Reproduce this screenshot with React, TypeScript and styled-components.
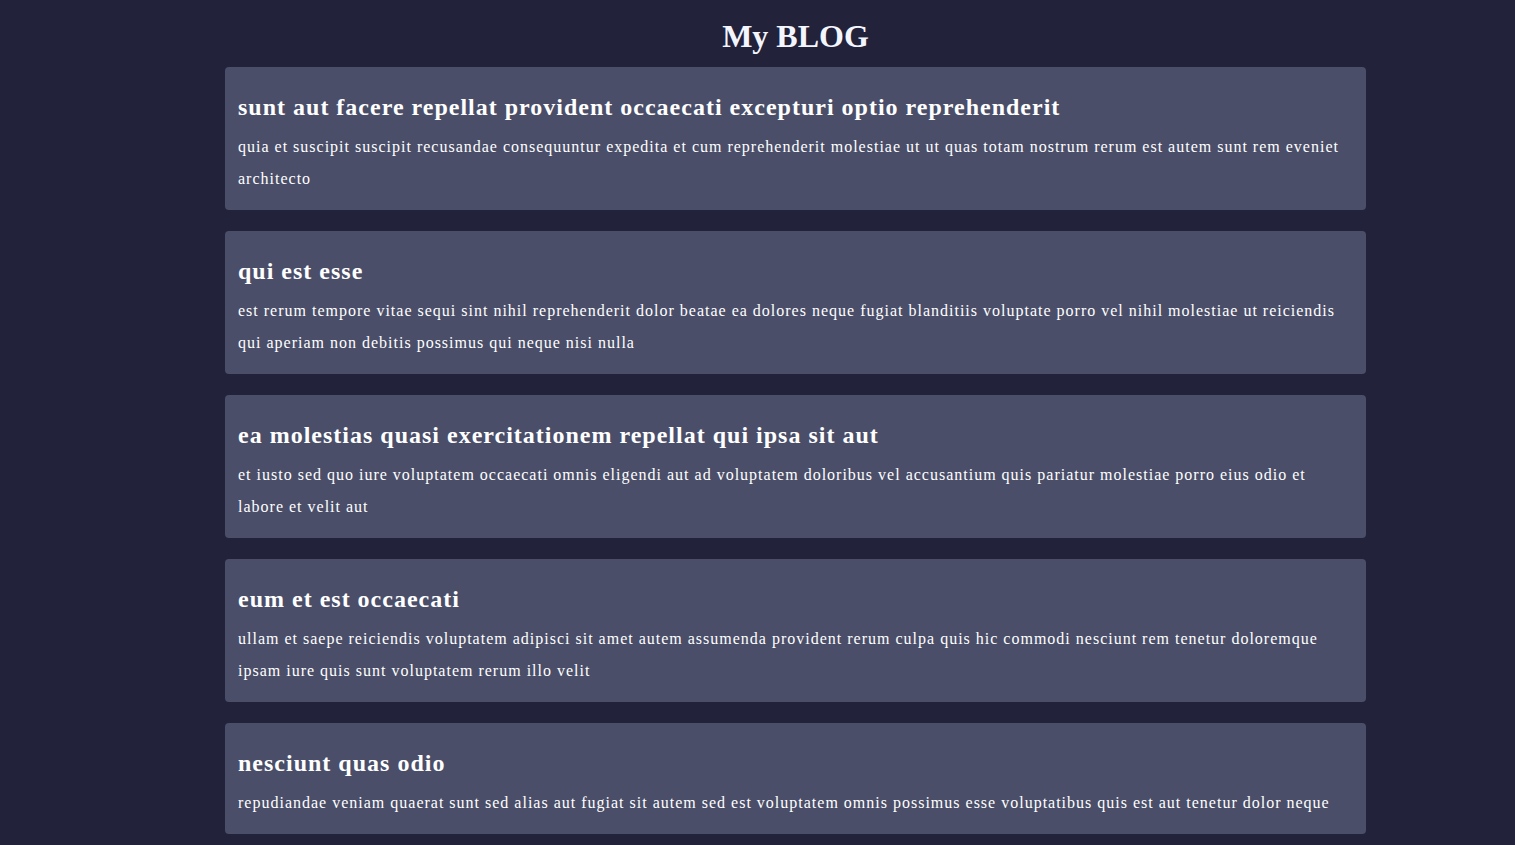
import React from "react";
import styled, { createGlobalStyle } from "styled-components";

const GlobalStyle = createGlobalStyle`
  html, body {
    margin: 0;
    padding: 0;
    background: #22223b;
    overflow: hidden;
  }
  body {
    font-family: "Liberation Serif", "Times New Roman", serif;
    color: #ffffff;
  }
`;

const Page = styled.main`
  width: 1141px;
  margin: 0 0 0 225px;
  padding: 18px 0 11px;
  display: flex;
  flex-direction: column;
  gap: 21px;
`;

const Heading = styled.h1`
  margin: 0 0 -9px;
  font-size: 32px;
  line-height: 37px;
  font-weight: 700;
  text-align: center;
  color: #f4f6ff;
`;

const Card = styled.article`
  background: #4a4e69;
  border-radius: 4px;
  padding: 26px 13px 15px;
`;

const Title = styled.h2`
  margin: 0 0 10px;
  font-size: 24px;
  line-height: 28px;
  font-weight: 700;
  letter-spacing: 1px;
`;

const Body = styled.p`
  margin: 0;
  font-size: 16px;
  line-height: 32px;
  letter-spacing: 1px;
`;

const posts = [
  {
    id: 1,
    title: "sunt aut facere repellat provident occaecati excepturi optio reprehenderit",
    body: "quia et suscipit suscipit recusandae consequuntur expedita et cum reprehenderit molestiae ut ut quas totam nostrum rerum est autem sunt rem eveniet architecto",
  },
  {
    id: 2,
    title: "qui est esse",
    body: "est rerum tempore vitae sequi sint nihil reprehenderit dolor beatae ea dolores neque fugiat blanditiis voluptate porro vel nihil molestiae ut reiciendis qui aperiam non debitis possimus qui neque nisi nulla",
  },
  {
    id: 3,
    title: "ea molestias quasi exercitationem repellat qui ipsa sit aut",
    body: "et iusto sed quo iure voluptatem occaecati omnis eligendi aut ad voluptatem doloribus vel accusantium quis pariatur molestiae porro eius odio et labore et velit aut",
  },
  {
    id: 4,
    title: "eum et est occaecati",
    body: "ullam et saepe reiciendis voluptatem adipisci sit amet autem assumenda provident rerum culpa quis hic commodi nesciunt rem tenetur doloremque ipsam iure quis sunt voluptatem rerum illo velit",
  },
  {
    id: 5,
    title: "nesciunt quas odio",
    body: "repudiandae veniam quaerat sunt sed alias aut fugiat sit autem sed est voluptatem omnis possimus esse voluptatibus quis est aut tenetur dolor neque",
  },
];

export default function App() {
  return (
    <>
      <GlobalStyle />
      <Page>
        <Heading>My BLOG</Heading>
        {posts.map((p) => (
          <Card key={p.id}>
            <Title>{p.title}</Title>
            <Body>{p.body}</Body>
          </Card>
        ))}
      </Page>
    </>
  );
}
